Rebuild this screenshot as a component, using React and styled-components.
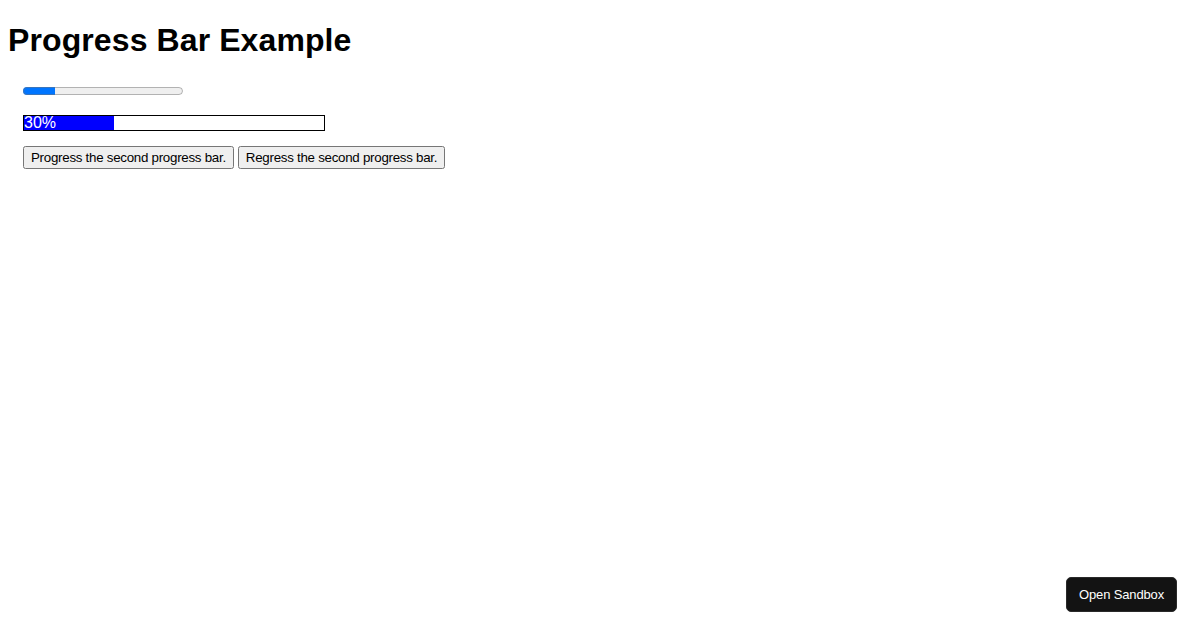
import { useState } from "react";
import styled, { createGlobalStyle } from "styled-components";

const GlobalStyle = createGlobalStyle`
  body {
    margin: 8px;
    font-family: "Liberation Sans", Arial, sans-serif;
    background: #ffffff;
    color: #000000;
  }
`;

const Title = styled.h1`
  font-size: 32px;
  font-weight: bold;
  letter-spacing: 0.1px;
  margin: 14px 0 24px;
`;

const Demo = styled.div`
  padding: 0 15px;
`;

const NativeBar = styled.progress`
  display: block;
  width: 160px;
  margin: 0 0 16px;
`;

const Track = styled.div`
  position: relative;
  width: 300px;
  height: 14px;
  border: 1px solid #000000;
  margin-bottom: 15px;
`;

const Fill = styled.div`
  height: 100%;
  background-color: #0000ff;
`;

const Label = styled.span`
  position: absolute;
  left: 0;
  top: -2px;
  font-size: 16px;
  line-height: 18px;
  color: #ffffff;
`;

const ButtonRow = styled.div`
  display: flex;
  gap: 4px;
`;

const Button = styled.button`
  font-family: "Liberation Sans", Arial, sans-serif;
  font-size: 13.33px;
  letter-spacing: -0.27px;
  padding: 2px 6px;
`;

const SandboxButton = styled.button`
  position: fixed;
  right: 23px;
  bottom: 18px;
  background: #131313;
  color: #ffffff;
  border: 1px solid #2a2a2a;
  border-radius: 5px;
  padding: 9px 12px;
  font-family: "Liberation Sans", Arial, sans-serif;
  font-size: 13px;
  letter-spacing: -0.15px;
`;

const App = () => {
  const [second, setSecond] = useState(30);

  return (
    <>
      <GlobalStyle />
      <Title>Progress Bar Example</Title>
      <Demo>
        <NativeBar value={20} max={100} />
        <Track>
          <Fill style={{ width: `${second}%` }} />
          <Label>{second}%</Label>
        </Track>
        <ButtonRow>
          <Button onClick={() => setSecond(v => Math.min(100, v + 10))}>
            Progress the second progress bar.
          </Button>
          <Button onClick={() => setSecond(v => Math.max(0, v - 10))}>
            Regress the second progress bar.
          </Button>
        </ButtonRow>
      </Demo>
      <SandboxButton>Open Sandbox</SandboxButton>
    </>
  );
};

export default App;
